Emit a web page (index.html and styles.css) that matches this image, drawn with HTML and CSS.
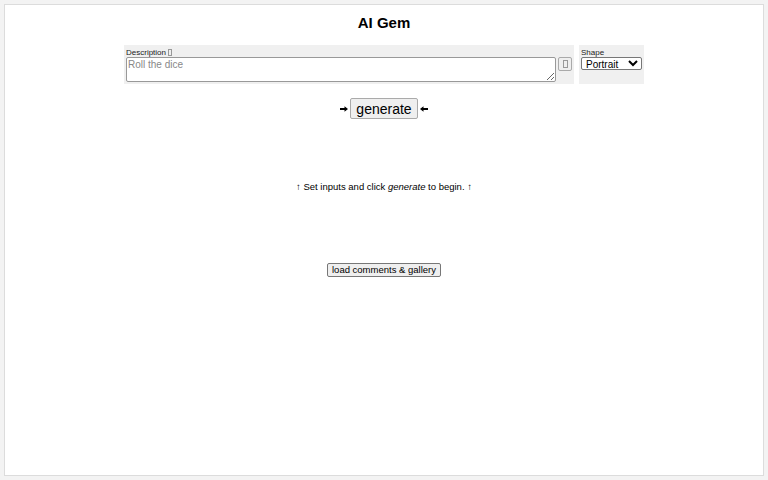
FILE: index.html
```html
<!DOCTYPE html>
<html>
<head>
<meta charset="utf-8">
<link rel="stylesheet" href="styles.css">
</head>
<body>
<div class="page">
  <h1 class="title">AI Gem</h1>
  <div class="inputs">
    <div class="field desc">
      <label class="lbl">Description <span class="tofu small"></span></label>
      <div class="desc-row">
        <textarea class="ta" placeholder="Roll the dice"></textarea>
        <button class="dice"><span class="tofu"></span></button>
      </div>
    </div>
    <div class="field shape">
      <label class="lbl">Shape</label>
      <select class="sel"><option>Portrait</option><option>Landscape</option><option>Square</option></select>
    </div>
  </div>
  <div class="gen-row">
    <svg class="arrow" width="8" height="6" viewBox="0 0 8 6"><path d="M0 2h4.5V0.3L8 3 4.5 5.7V4H0z" fill="#000"/></svg>
    <button class="gen">generate</button>
    <svg class="arrow" width="8" height="6" viewBox="0 0 8 6"><path d="M8 2H3.5V0.3L0 3l3.5 2.7V4H8z" fill="#000"/></svg>
  </div>
  <p class="hint">&#x2191; Set inputs and click <em>generate</em> to begin. &#x2191;</p>
  <div class="load-row"><button class="load">load comments &amp; gallery</button></div>
</div>
</body>
</html>
```
FILE: styles.css
```css
html, body { margin: 0; padding: 0; }
body {
  background: #f3f3f3;
  font-family: "Liberation Sans", Arial, sans-serif;
  padding: 4px;
  height: 480px;
  box-sizing: border-box;
}
.page {
  background: #fff;
  border: 1px solid #dcdcdc;
  height: 472px;
  box-sizing: border-box;
  display: flex;
  flex-direction: column;
  align-items: center;
}
.title {
  font-size: 15px;
  font-weight: bold;
  margin: 9px 0 0;
  line-height: 17px;
}
.inputs {
  display: flex;
  gap: 5px;
  margin-top: 14px;
}
.field {
  background: #f0f0f0;
  padding: 4px 2px 2px;
  height: 39px;
  box-sizing: border-box;
  display: flex;
  flex-direction: column;
}
.desc { width: 450px; }
.shape { width: 65px; }
.lbl {
  font-size: 8px;
  line-height: 8px;
  color: #222;
}
.desc-row { display: flex; gap: 2px; align-items: flex-start; }
.ta {
  width: 430px;
  height: 25px;
  box-sizing: border-box;
  font-family: "Liberation Sans", Arial, sans-serif;
  font-size: 10px;
  padding: 1px 1px;
  border: 1px solid #999;
  border-radius: 2px;
  margin: 0;
  resize: vertical;
}
.ta::placeholder { color: #888; }
.dice {
  width: 14px;
  height: 14px;
  padding: 0;
  margin: 0;
  background: #efefef;
  border: 1px solid #aaa;
  border-radius: 2px;
  display: flex;
  align-items: center;
  justify-content: center;
}
.tofu {
  display: inline-block;
  width: 3px;
  height: 6px;
  border: 1px solid #999;
}
.tofu.small { width: 2px; height: 5px; border-color: #999; vertical-align: -1px; }
.sel {
  width: 61px;
  height: 13px;
  font-family: "Liberation Sans", Arial, sans-serif;
  font-size: 10px;
  padding: 0;
  margin: 0;
  border: 1px solid #777;
  border-radius: 2px;
  background: #fff;
}
.gen-row {
  display: flex;
  align-items: center;
  gap: 2px;
  margin-top: 14px;
}
.arrow { display: block; margin-top: 1px; }
.gen {
  font-family: "Liberation Sans", Arial, sans-serif;
  font-size: 14px;
  padding: 1px 5px;
  height: 21px;
  background: #efefef;
  border: 1px solid #aaa;
  border-radius: 2px;
  margin: 0;
}
.hint {
  font-size: 9.5px;
  margin: 62px 0 0;
  line-height: 12px;
}
.load-row { margin-top: 66px; }
.load {
  font-family: "Liberation Sans", Arial, sans-serif;
  font-size: 9.5px;
  padding: 0 4px;
  height: 14px;
  background: #efefef;
  border: 1px solid #777;
  border-radius: 2px;
  margin: 0;
}
```
